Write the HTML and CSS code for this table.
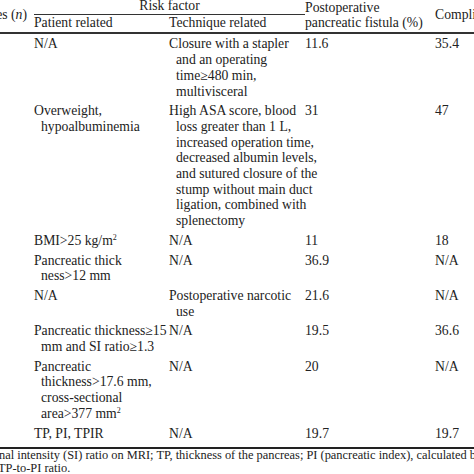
FILE: index.html
```html
<!DOCTYPE html>
<html lang="en">
<head>
<meta charset="utf-8">
<title>Risk factors table</title>
<link rel="stylesheet" href="styles.css">
</head>
<body>
<div class="page">
  <table class="risk">
    <colgroup>
      <col class="c0"><col class="c1"><col class="c2"><col class="c3"><col class="c4">
    </colgroup>
    <thead>
      <tr>
        <th class="h-side h-cases" rowspan="2">Cases (<i>n</i>)</th>
        <th class="h-group" colspan="2">Risk factor</th>
        <th class="h-side" rowspan="2">Postoperative<br>pancreatic fistula (%)</th>
        <th class="h-side" rowspan="2">Complications (%)</th>
      </tr>
      <tr>
        <th class="h-sub">Patient related</th>
        <th class="h-sub">Technique related</th>
      </tr>
    </thead>
    <tbody>
      <tr>
        <td></td>
        <td>N/A</td>
        <td>Closure with a stapler<br>and an operating<br>time≥480 min,<br>multivisceral</td>
        <td>11.6</td>
        <td>35.4</td>
      </tr>
      <tr>
        <td></td>
        <td>Overweight,<br>hypoalbuminemia</td>
        <td>High ASA score, blood<br>loss greater than 1 L,<br>increased operation time,<br>decreased albumin levels,<br>and sutured closure of the<br>stump without main duct<br>ligation, combined with<br>splenectomy</td>
        <td>31</td>
        <td>47</td>
      </tr>
      <tr>
        <td></td>
        <td>BMI&gt;25 kg/m<sup>2</sup></td>
        <td>N/A</td>
        <td>11</td>
        <td>18</td>
      </tr>
      <tr>
        <td></td>
        <td>Pancreatic thick<br>ness&gt;12 mm</td>
        <td>N/A</td>
        <td>36.9</td>
        <td>N/A</td>
      </tr>
      <tr>
        <td></td>
        <td>N/A</td>
        <td>Postoperative narcotic<br>use</td>
        <td>21.6</td>
        <td>N/A</td>
      </tr>
      <tr>
        <td></td>
        <td>Pancreatic thickness≥15<br>mm and SI ratio≥1.3</td>
        <td>N/A</td>
        <td>19.5</td>
        <td>36.6</td>
      </tr>
      <tr>
        <td></td>
        <td>Pancreatic<br>thickness&gt;17.6 mm,<br>cross-sectional<br>area&gt;377 mm<sup>2</sup></td>
        <td>N/A</td>
        <td>20</td>
        <td>N/A</td>
      </tr>
      <tr class="last">
        <td></td>
        <td>TP, PI, TPIR</td>
        <td>N/A</td>
        <td>19.7</td>
        <td>19.7</td>
      </tr>
    </tbody>
  </table>
  <div class="notes">
    <div class="note-line first">nal intensity (SI) ratio on MRI; TP, thickness of the pancreas; PI (pancreatic index), calculated by</div>
    <div class="note-line second">TP-to-PI ratio.</div>
  </div>
</div>
</body>
</html>
```

FILE: styles.css
```css
html, body {
  margin: 0;
  padding: 0;
  background: #ffffff;
}

body {
  font-family: "Liberation Serif", "DejaVu Serif", serif;
  color: #222222;
}

.page {
  width: 474px;
  height: 474px;
  overflow: hidden;
  background: #ffffff;
}

.risk {
  border-collapse: collapse;
  table-layout: fixed;
  width: 601px;
  margin: -2px 0 0 -46px;
  font-size: 13.7px;
  line-height: 15.7px;
}

.c0 { width: 80px; }
.c1 { width: 135px; }
.c2 { width: 136px; }
.c3 { width: 130px; }
.c4 { width: 120px; }

.risk th {
  font-weight: normal;
  text-align: left;
  white-space: nowrap;
  padding: 0;
}

.risk th.h-side {
  vertical-align: middle;
  border-bottom: 2px solid #333333;
}

.risk th.h-cases {
  text-align: right;
  padding-right: 7px;
}

.risk th.h-group {
  text-align: center;
  border-bottom: 1px solid #333333;
}

.risk th.h-sub {
  padding: 0 0 2px 0;
  border-bottom: 2px solid #333333;
  vertical-align: top;
}

.risk td {
  vertical-align: top;
  white-space: nowrap;
  padding: 2px 0 2px 7px;
  text-indent: -7px;
}

.risk tr.last td {
  padding-bottom: 6px;
  border-bottom: 2px solid #222222;
}

.risk sup {
  font-size: 8px;
  line-height: 0;
  vertical-align: 5px;
}

.notes {
  margin-top: 0;
  font-size: 12.4px;
  line-height: 13px;
  white-space: nowrap;
}

.note-line.first {
  margin-left: -1px;
}

.note-line.second {
  margin-left: -2px;
}
```
